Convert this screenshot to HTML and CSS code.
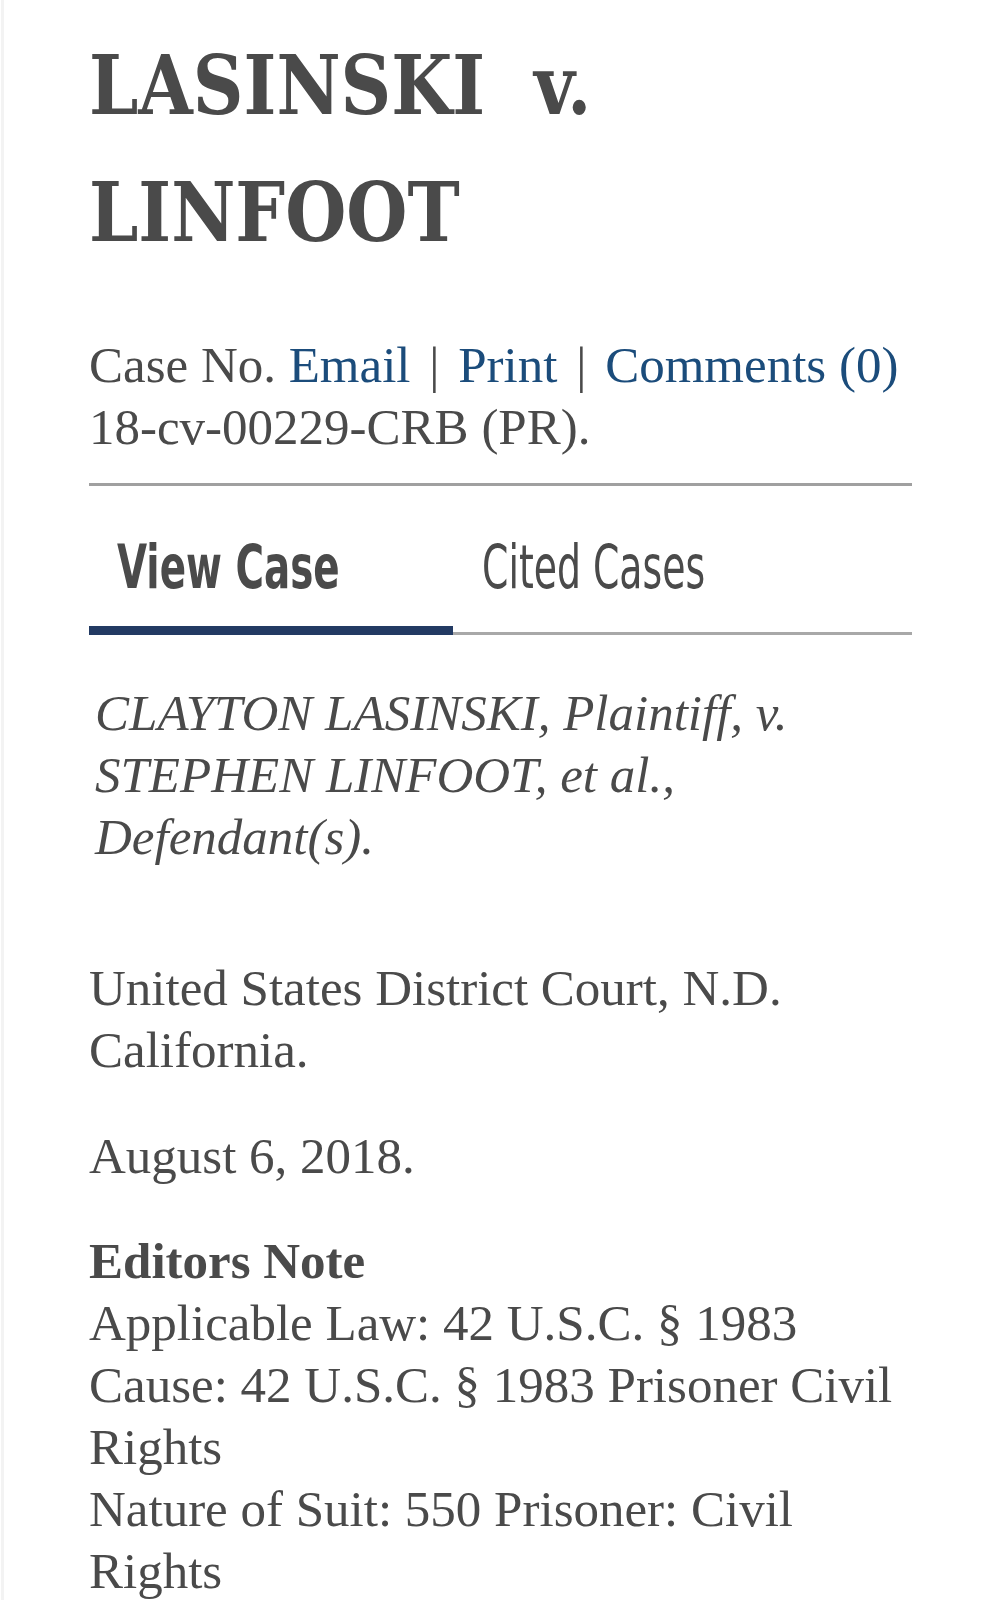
FILE: index.html
```html
<!DOCTYPE html>
<html lang="en">
<head>
<meta charset="utf-8">
<title>LASINSKI v. LINFOOT</title>
<link rel="stylesheet" href="styles.css">
</head>
<body>
<div class="page">
  <main class="content">
    <h1 class="title">LASINSKI&nbsp; v. LINFOOT</h1>
    <p class="meta">Case No. <a href="#">Email</a> <span class="sep">|</span> <a href="#">Print</a> <span class="sep">|</span> <a href="#">Comments (0)</a> 18-cv-00229-CRB (PR).</p>
    <hr class="rule">
    <nav class="tabs">
      <a class="tab active" href="#"><span class="tab-label">View Case</span></a>
      <a class="tab" href="#"><span class="tab-label">Cited Cases</span></a>
    </nav>
    <p class="parties">CLAYTON LASINSKI, Plaintiff, v. STEPHEN LINFOOT, et al., Defendant(s).</p>
    <p class="court">United States District Court, N.D. California.</p>
    <p class="date">August 6, 2018.</p>
    <div class="note">
      <div class="note-title">Editors Note</div>
      <div>Applicable Law: 42 U.S.C. § 1983</div>
      <div>Cause: 42 U.S.C. § 1983 Prisoner Civil Rights</div>
      <div>Nature of Suit: 550 Prisoner: Civil Rights</div>
    </div>
  </main>
</div>
</body>
</html>
```
FILE: styles.css
```css
html, body {
  margin: 0;
  padding: 0;
  background: #ffffff;
}
.page {
  min-height: 1600px;
  border-left: 3px solid #f3f3f3;
  margin-left: 1px;
}
.content {
  width: 823px;
  padding-left: 85px;
  color: #4a4a4a;
  font-family: "Liberation Serif", "Times New Roman", serif;
  font-size: 51px;
  line-height: 62px;
}
.title {
  margin: 0;
  padding-top: 22px;
  width: 600px;
  font-family: "DejaVu Serif Condensed", "DejaVu Serif", serif;
  font-weight: bold;
  font-size: 83px;
  line-height: 127px;
  color: #4a4a4a;
  transform: scaleX(0.94);
  transform-origin: left top;
}
.meta {
  margin: 58px 0 0;
}
.meta a {
  color: #1b4c7b;
  text-decoration: none;
}
.sep {
  color: #4a4a4a;
  padding: 0 6px;
}
.rule {
  margin: 25px 0 0;
  border: 0;
  height: 3px;
  background: #a0a0a0;
}
.tabs {
  display: flex;
  margin-top: 46px;
  border-bottom: 3px solid #a8a8a8;
}
.tab {
  display: block;
  padding: 0 0 24px 28px;
  font-family: "Liberation Sans Narrow", "DejaVu Sans Condensed", sans-serif;
  font-size: 60px;
  line-height: 70px;
  color: #4a4a4a;
  text-decoration: none;
  margin-bottom: -3px;
  border-bottom: 9px solid transparent;
  white-space: nowrap;
}
.tab-label {
  display: inline-block;
  transform-origin: left center;
}
.tab.active {
  width: 336px;
  font-weight: bold;
  border-bottom-color: #223a63;
}
.tab.active .tab-label {
  transform: scaleX(0.72);
}
.tab:not(.active) {
  flex: 1;
  padding-left: 29px;
  font-weight: normal;
}
.tab:not(.active) .tab-label {
  transform: scaleX(0.7);
}
.parties {
  margin: 47px 0 0;
  padding-left: 6px;
  font-style: italic;
}
.court {
  margin: 89px 0 0;
}
.date {
  margin: 44px 0 0;
}
.note {
  margin-top: 43px;
}
.note-title {
  font-weight: bold;
}
```
